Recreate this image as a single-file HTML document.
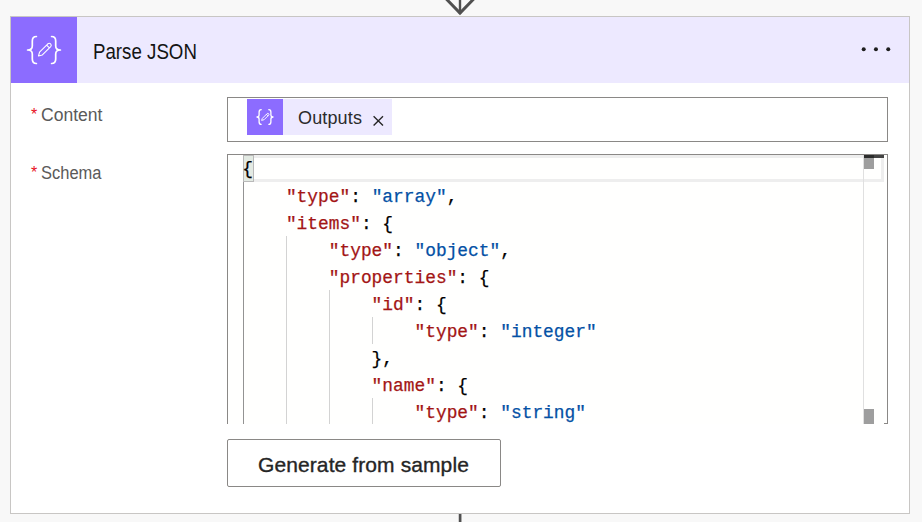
<!DOCTYPE html>
<html><head><meta charset="utf-8">
<style>
*{margin:0;padding:0;box-sizing:border-box}
html,body{width:922px;height:522px;overflow:hidden;background:#f8f8f8;font-family:"Liberation Sans",sans-serif;position:relative}
.abs{position:absolute}
#card{left:10px;top:16px;width:900px;height:498px;border:1px solid #c8c6c4;background:#fff}
#hdr{left:11px;top:17px;width:898px;height:66px;background:#ede9ff}
#hicon{left:11px;top:17px;width:66px;height:66px;background:#8c6cff}
#title{left:93px;top:40px;font-size:22px;color:#141414;white-space:nowrap;line-height:24px;transform:scaleX(0.85);transform-origin:0 0}
.dot{width:3.7px;height:3.7px;border-radius:50%;background:#1e1e1e;top:47.6px}
.lbl{font-size:17px;color:#5a5a5a;white-space:nowrap;line-height:20px}
.st{font-size:16px;color:#e81123;line-height:20px}
#inp{left:227px;top:97px;width:661px;height:45px;border:1px solid #8a8886;background:#fff}
#tok{left:247px;top:99px;width:145px;height:36px;background:#ede9ff}
#tokicon{left:247px;top:99px;width:36px;height:36px;background:#8c6cff}
#toktxt{left:298px;top:108px;letter-spacing:0.15px;font-size:18px;color:#2b2b2b;line-height:20px;white-space:nowrap}
#tokx{left:372px;top:115px;width:12px;height:11px}
#ed{left:227px;top:154px;width:661px;height:270px;border:1px solid #8a8886;border-bottom:none;background:#fffffe;overflow:hidden}
#code{left:243px;top:157px;-webkit-text-stroke:0.25px currentColor;font-family:"Liberation Mono",monospace;font-size:17.87px;line-height:27px;white-space:pre;color:#000}
.k{color:#a31515}.s{color:#0451a5}
.g{width:1px;background:#d3d3d3}
#btn{left:227px;top:439px;width:274px;height:48px;border:1px solid #8a8886;border-radius:2px;background:#fff}
#btntxt{left:258px;top:453px;font-size:21px;color:#252525;-webkit-text-stroke:0.35px #252525;letter-spacing:0.1px;line-height:24px;white-space:nowrap}
</style></head><body>
<!-- top arrow -->
<svg class="abs" style="left:0;top:0" width="922" height="20">
  <line x1="460" y1="0" x2="460" y2="14" stroke="#505050" stroke-width="2.4"/>
  <polyline points="446.3,-1 460,13 473.7,-1" fill="none" stroke="#505050" stroke-width="3"/>
</svg>
<div id="card" class="abs"></div>
<div id="hdr" class="abs"></div>
<div id="hicon" class="abs">
  <svg width="66" height="66" viewBox="0 0 66 66">
    <g fill="none" stroke="#fff" stroke-width="1.7" stroke-linecap="round" stroke-linejoin="round">
      <path d="M25.4,19.5 C22.5,19.5 21.3,21 21.3,24 L21.3,29 C21.3,31.5 19.5,33 16.6,33 C19.5,33 21.3,34.5 21.3,37 L21.3,42 C21.3,45 22.5,46.5 25.4,46.5"/>
      <path d="M40.6,19.5 C43.5,19.5 44.7,21 44.7,24 L44.7,29 C44.7,31.5 46.5,33 49.4,33 C46.5,33 44.7,34.5 44.7,37 L44.7,42 C44.7,45 43.5,46.5 40.6,46.5"/>
      <path d="M27.5,39 L31.38,37.94 L39.71,29.61 A2,2 0 0 0 36.89,26.79 L28.56,35.11 Z M38.44,30.88 L35.62,28.06" stroke-width="1.1"/>
    </g>
  </svg>
</div>
<div id="title" class="abs">Parse JSON</div>
<svg class="abs" style="left:850px;top:40px" width="50" height="20"><g fill="#1e1e1e"><circle cx="13.7" cy="9.3" r="2"/><circle cx="25.95" cy="9.3" r="2"/><circle cx="38.25" cy="9.3" r="2"/></g></svg>

<div class="st abs" style="left:31px;top:105px">*</div>
<div class="lbl abs" style="left:41px;top:105px;font-size:18px;transform:scaleX(0.975);transform-origin:0 0">Content</div>
<div class="st abs" style="left:31px;top:163px">*</div>
<div class="lbl abs" style="left:41px;top:163px;font-size:18px;transform:scaleX(0.915);transform-origin:0 0">Schema</div>

<div id="inp" class="abs"></div>
<div id="tok" class="abs"></div>
<div id="tokicon" class="abs">
  <svg width="36" height="36" viewBox="0 0 66 66">
    <g fill="none" stroke="#fff" stroke-width="2.4" stroke-linecap="round" stroke-linejoin="round">
      <path d="M26,19.5 C23.2,19.5 22.2,21 22.2,24 L22.2,29 C22.2,31.5 20.5,33 18.3,33 C20.5,33 22.2,34.5 22.2,37 L22.2,42 C22.2,45 23.2,46.5 26,46.5"/>
      <path d="M40,19.5 C42.8,19.5 43.8,21 43.8,24 L43.8,29 C43.8,31.5 45.5,33 47.7,33 C45.5,33 43.8,34.5 43.8,37 L43.8,42 C43.8,45 42.8,46.5 40,46.5"/>
      <path d="M27.5,39 L31.38,37.94 L39.71,29.61 A2,2 0 0 0 36.89,26.79 L28.56,35.11 Z M38.44,30.88 L35.62,28.06" stroke-width="1.7"/>
    </g>
  </svg>
</div>
<div id="toktxt" class="abs">Outputs</div>
<svg id="tokx" class="abs" width="12" height="11" viewBox="0 0 12 11"><path d="M1.6,1.3 L11,10.5 M11,1.3 L1.6,10.5" stroke="#252525" stroke-width="1.35"/></svg>

<div id="ed" class="abs"></div>
<!-- line highlight -->
<div class="abs" style="left:254px;top:155px;width:630px;height:27px;border:3px solid #eeeeee;border-left:none"></div>
<!-- bracket match box -->
<div class="abs" style="left:243px;top:155px;width:11px;height:27px;border:1px solid #b9b9b9;background:#e3eae3"></div>
<!-- indent guides -->
<div class="abs g" style="left:243px;top:182px;height:242px;background:#939393"></div>
<div class="abs g" style="left:286px;top:236px;height:188px"></div>
<div class="abs g" style="left:329px;top:290px;height:134px"></div>
<div class="abs g" style="left:372px;top:317px;height:27px"></div>
<div class="abs g" style="left:372px;top:398px;height:26px"></div>
<!-- scrollbar -->
<div class="abs" style="left:863px;top:155px;width:1px;height:269px;background:#e0e0e0"></div>
<div class="abs" style="left:864px;top:155px;width:10px;height:3px;background:#2c2c2c"></div>
<div class="abs" style="left:874px;top:155px;width:10px;height:3px;background:#444"></div>
<div class="abs" style="left:864px;top:158px;width:10px;height:11px;background:#9e9e9e"></div>
<div class="abs" style="left:864px;top:409px;width:10px;height:15px;background:#9e9e9e"></div>
<div class="abs" style="left:884px;top:423px;width:4px;height:1px;background:#8a8886"></div>
<div id="code" class="abs"><span style="position:relative;top:-1px;left:-0.7px">{</span>
    <span class="k">"type"</span>: <span class="s">"array"</span>,
    <span class="k">"items"</span>: {
        <span class="k">"type"</span>: <span class="s">"object"</span>,
        <span class="k">"properties"</span>: {
            <span class="k">"id"</span>: {
                <span class="k">"type"</span>: <span class="s">"integer"</span>
            },
            <span class="k">"name"</span>: {
                <span class="k">"type"</span>: <span class="s">"string"</span>
</div>
<div class="abs" style="left:228px;top:424px;width:659px;height:14px;background:#fff"></div>

<div id="btn" class="abs"></div>
<div id="btntxt" class="abs">Generate from sample</div>
<svg class="abs" style="left:450px;top:514px" width="20" height="8"><line x1="10.1" y1="0" x2="10.1" y2="8" stroke="#505050" stroke-width="2.7"/></svg>
</body></html>
